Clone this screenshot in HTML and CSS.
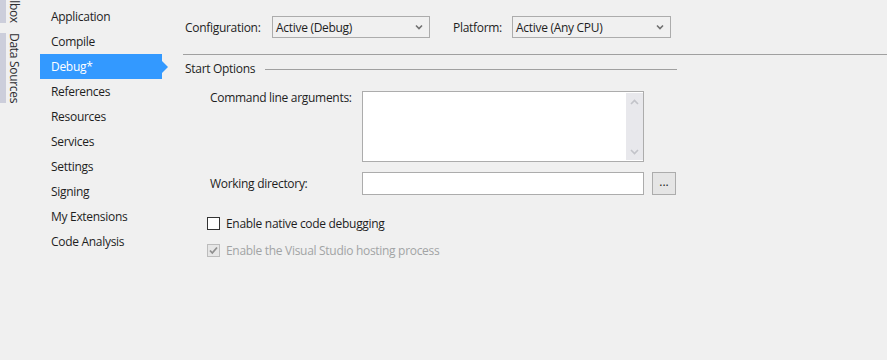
FILE: index.html
```html
<!DOCTYPE html>
<html>
<head>
    <title>Project Properties - Debug</title>
    <link rel="stylesheet" href="styles.css">
</head>
<body>
    <div class="window">
        <div class="tool-tabs">
            <div class="tool-tab tool-tab-clipped">Toolbox</div>
            <div class="tool-tab">Data Sources</div>
        </div>

        <ul class="nav">
            <li class="nav-item">Application</li>
            <li class="nav-item">Compile</li>
            <li class="nav-item active">Debug*</li>
            <li class="nav-item">References</li>
            <li class="nav-item">Resources</li>
            <li class="nav-item">Services</li>
            <li class="nav-item">Settings</li>
            <li class="nav-item">Signing</li>
            <li class="nav-item">My Extensions</li>
            <li class="nav-item">Code Analysis</li>
        </ul>

        <div class="content">
            <div class="config-row">
                <span class="config-label label-config">Configuration:</span>
                <div class="dropdown">
                    <span>Active (Debug)</span>
                    <svg width="8" height="6" viewBox="0 0 8 6"><path d="M1 1.5 L4 4.5 L7 1.5" fill="none" stroke="#707070" stroke-width="1.6"/></svg>
                </div>
                <span class="config-label label-platform">Platform:</span>
                <div class="dropdown dropdown-wide">
                    <span>Active (Any CPU)</span>
                    <svg width="8" height="6" viewBox="0 0 8 6"><path d="M1 1.5 L4 4.5 L7 1.5" fill="none" stroke="#707070" stroke-width="1.6"/></svg>
                </div>
            </div>

            <div class="divider"></div>

            <div class="group-header">Start Options</div>

            <div class="fields">
                <label class="field-label field-label-top">Command line arguments:</label>
                <div class="text-area">
                    <div class="scrollbar">
                        <svg width="9" height="6" viewBox="0 0 9 6"><path d="M1 5 L4.5 1.5 L8 5" fill="none" stroke="#c2c3c9" stroke-width="1.6"/></svg>
                        <svg width="9" height="6" viewBox="0 0 9 6"><path d="M1 1 L4.5 4.5 L8 1" fill="none" stroke="#c2c3c9" stroke-width="1.6"/></svg>
                    </div>
                </div>
                <div></div>

                <label class="field-label">Working directory:</label>
                <div class="text-input"></div>
                <div class="browse-button">...</div>
            </div>

            <div class="options">
                <div class="check">
                    <span class="check-box"></span>
                    <span>Enable native code debugging</span>
                </div>
                <div class="check check-disabled">
                    <span class="check-box">
                        <svg width="11" height="11" viewBox="0 0 11 11"><path d="M2 5.5 L4.3 8 L9 2.5" fill="none" stroke="#8f8f8f" stroke-width="1.8"/></svg>
                    </span>
                    <span>Enable the Visual Studio hosting process</span>
                </div>
            </div>
        </div>
    </div>
</body>
</html>
```

FILE: styles.css
```css
:root {
    --text-color: #1e1e1e;
    --muted-color: #a2a4a5;
    --background-color: #f0f0f0;
    --accent-color: #3399ff;
    --border-color: #acacac;
    --rule-color: #a0a0a0;
}

* {
    margin: 0;
    padding: 0;
    box-sizing: border-box;
}

body {
    font-family: 'Open Sans', sans-serif;
    font-size: 12px;
    letter-spacing: -0.3px;
    color: var(--text-color);
    background-color: var(--background-color);
}

.window {
    display: flex;
    height: 360px;
    overflow: hidden;
}

/* docked tool window tabs */
.tool-tabs {
    width: 22px;
    flex-shrink: 0;
    display: flex;
    flex-direction: column;
    gap: 10px;
    overflow: hidden;
}

.tool-tab {
    writing-mode: vertical-rl;
    white-space: nowrap;
    border-left: 6px solid #cccedb;
    line-height: 16px;
    padding-left: 1px;
    color: #2d2d30;
}

.tool-tab-clipped {
    margin-top: -20px;
}

/* property page list */
.nav {
    list-style: none;
    width: 122px;
    margin-left: 18px;
    padding-top: 4px;
    flex-shrink: 0;
}

.nav-item {
    position: relative;
    height: 25px;
    line-height: 25px;
    padding-left: 11px;
}

.nav-item.active {
    background-color: var(--accent-color);
    color: #fff;
}

.nav-item.active::after {
    content: "";
    position: absolute;
    right: -6px;
    top: 50%;
    margin-top: -6px;
    border-left: 6px solid var(--accent-color);
    border-top: 6px solid transparent;
    border-bottom: 6px solid transparent;
}

.content {
    flex: 1;
    margin-left: 21px;
    padding-top: 16px;
}

.config-row {
    display: flex;
    align-items: center;
    height: 22px;
    padding-left: 2px;
}

.label-config {
    width: 87px;
}

.label-platform {
    width: 59px;
    margin-left: 23px;
}

.dropdown {
    width: 158px;
    height: 22px;
    border: 1px solid var(--border-color);
    display: flex;
    align-items: center;
    justify-content: space-between;
    padding: 0 6px 0 3px;
}

.dropdown-wide {
    width: 159px;
}

.divider {
    height: 1px;
    background-color: var(--rule-color);
    margin-top: 16px;
}

.group-header {
    display: flex;
    align-items: center;
    gap: 10px;
    width: 494px;
    margin-top: 6px;
    padding-left: 2px;
    line-height: 16px;
}

.group-header::after {
    content: "";
    flex: 1;
    height: 1px;
    background-color: var(--rule-color);
}

.fields {
    display: grid;
    grid-template-columns: 144px 282px 24px;
    column-gap: 8px;
    row-gap: 10px;
    margin-top: 14px;
    padding-left: 27px;
}

.field-label {
    align-self: center;
    line-height: 14px;
}

.field-label-top {
    align-self: start;
    line-height: 13px;
}

.text-area {
    height: 71px;
    background: #fff;
    border: 1px solid var(--border-color);
    display: flex;
    justify-content: flex-end;
}

.scrollbar {
    width: 17px;
    margin: 1px 0;
    background-color: #e8e8ec;
    display: flex;
    flex-direction: column;
    align-items: center;
    justify-content: space-between;
    padding: 6px 0 5px;
}

.text-input {
    height: 23px;
    background: #fff;
    border: 1px solid var(--border-color);
}

.browse-button {
    height: 23px;
    border: 1px solid var(--border-color);
    background-color: #e5e5e5;
    text-align: center;
    line-height: 18px;
    letter-spacing: 0;
}

.options {
    margin-top: 15px;
    padding-left: 24px;
}

.check {
    display: flex;
    align-items: center;
    gap: 6px;
    height: 27px;
}

.check-box {
    width: 13px;
    height: 13px;
    border: 1px solid #333;
    background: #fff;
    display: flex;
    align-items: center;
    justify-content: center;
}

.check-disabled {
    color: var(--muted-color);
}

.check-disabled .check-box {
    border-color: #bcbcbc;
    background: #e6e6e6;
}
```
